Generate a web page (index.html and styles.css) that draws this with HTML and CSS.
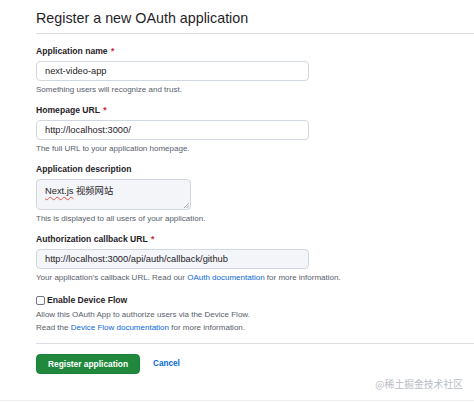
FILE: index.html
```html
<!DOCTYPE html>
<html>
<head>
  <title>Register a new OAuth application</title>
  <link rel="stylesheet" href="styles.css">
</head>
<body>
<div class="page">
  <h1 class="title">Register a new OAuth application</h1>

  <form class="app-form">
    <div class="group">
      <label class="label">Application name <span class="req">*</span></label>
      <input class="field" type="text" value="next-video-app">
      <p class="note">Something users will recognize and trust.</p>
    </div>

    <div class="group">
      <label class="label">Homepage URL <span class="req">*</span></label>
      <input class="field" type="text" value="http://localhost:3000/">
      <p class="note">The full URL to your application homepage.</p>
    </div>

    <div class="group">
      <label class="label">Application description</label>
      <div class="area">
        <span class="typo">Next.js</span> 视频网站
        <svg class="grip" width="6" height="6" viewBox="0 0 6 6">
          <line x1="1" y1="6" x2="6" y2="1" stroke="#8c959f" stroke-width="0.8"/>
          <line x1="3.5" y1="6" x2="6" y2="3.5" stroke="#8c959f" stroke-width="0.8"/>
        </svg>
      </div>
      <p class="note">This is displayed to all users of your application.</p>
    </div>

    <div class="group">
      <label class="label">Authorization callback URL <span class="req">*</span></label>
      <input class="field filled" type="text" value="http://localhost:3000/api/auth/callback/github">
      <p class="note">Your application’s callback URL. Read our <a href="#">OAuth documentation</a> for more information.</p>
    </div>

    <div class="device">
      <label class="check-row"><span class="box"></span>Enable Device Flow</label>
      <p class="note tall">Allow this OAuth App to authorize users via the Device Flow.</p>
      <p class="note tall">Read the <a href="#">Device Flow documentation</a> for more information.</p>
    </div>

    <div class="actions">
      <button class="btn-primary" type="button">Register application</button>
      <a class="cancel" href="#">Cancel</a>
    </div>
  </form>
</div>
<div class="watermark">@稀土掘金技术社区</div>
</body>
</html>
```

FILE: styles.css
```css
html, body {
  margin: 0;
  padding: 0;
  background: #ffffff;
}

body {
  position: relative;
  width: 474px;
  height: 400px;
  overflow: hidden;
  font-family: "Liberation Sans", "Noto Sans CJK SC", sans-serif;
  color: #1f2328;
  border-bottom: 1px solid #eceef0;
}

.page {
  padding-left: 36px;
}

.title {
  margin: 0;
  padding: 8px 0 5px;
  font-size: 14.3px;
  line-height: 20px;
  font-weight: normal;
  border-bottom: 1px solid #d8dee4;
}

.app-form {
  margin: 0;
  padding-top: 11px;
}

.group {
  margin-bottom: 9px;
}

.label {
  display: block;
  font-size: 8.6px;
  line-height: 12px;
  font-weight: bold;
}

.req {
  color: #cf222e;
  margin-left: 1px;
}

.field {
  display: block;
  box-sizing: border-box;
  width: 273px;
  height: 20px;
  margin: 4px 0 0;
  padding: 0 8px;
  font-family: "Liberation Sans", "Noto Sans CJK SC", sans-serif;
  font-size: 9.3px;
  color: #1f2328;
  background: #ffffff;
  border: 1px solid #d0d7de;
  border-radius: 4px;
  outline: none;
}

.filled {
  background: #f3f5f8;
}

.area {
  position: relative;
  box-sizing: border-box;
  width: 155px;
  height: 31px;
  margin-top: 4px;
  padding: 5px 8px;
  font-size: 9.3px;
  line-height: 12px;
  background: #f3f5f8;
  border: 1px solid #d0d7de;
  border-radius: 4px;
}

.typo {
  text-decoration: underline wavy #e5534b;
  text-decoration-thickness: 0.5px;
  text-underline-offset: 1.5px;
}

.grip {
  position: absolute;
  right: 1px;
  bottom: 1px;
}

.note {
  margin: 3px 0 0;
  font-size: 8px;
  line-height: 11px;
  color: #57606a;
}

.note a {
  color: #0969da;
  text-decoration: none;
}

.device {
  padding-top: 2px;
  padding-bottom: 9px;
  border-bottom: 1px solid #d8dee4;
}

.check-row {
  display: flex;
  align-items: center;
  gap: 2px;
  font-size: 8.6px;
  line-height: 12px;
  font-weight: bold;
}

.box {
  width: 7px;
  height: 7px;
  border: 1px solid #6e7781;
  border-radius: 2px;
  background: #ffffff;
}

.note.tall {
  margin-top: 1.5px;
  line-height: 13px;
}

.note.tall + .note.tall {
  margin-top: 0;
}

.actions {
  display: flex;
  align-items: center;
  gap: 13px;
  padding-top: 10px;
}

.btn-primary {
  height: 20px;
  padding: 0 11px;
  font-family: "Liberation Sans", sans-serif;
  font-size: 8.4px;
  font-weight: bold;
  color: #ffffff;
  background: #1f883d;
  border: 1px solid #1a7f37;
  border-radius: 4px;
}

.cancel {
  font-size: 8.2px;
  font-weight: bold;
  color: #0969da;
  text-decoration: none;
}

.watermark {
  position: absolute;
  right: 11px;
  top: 378px;
  font-family: "Noto Sans CJK SC", sans-serif;
  font-size: 9.8px;
  line-height: 13px;
  color: #b8bcc2;
}
```
